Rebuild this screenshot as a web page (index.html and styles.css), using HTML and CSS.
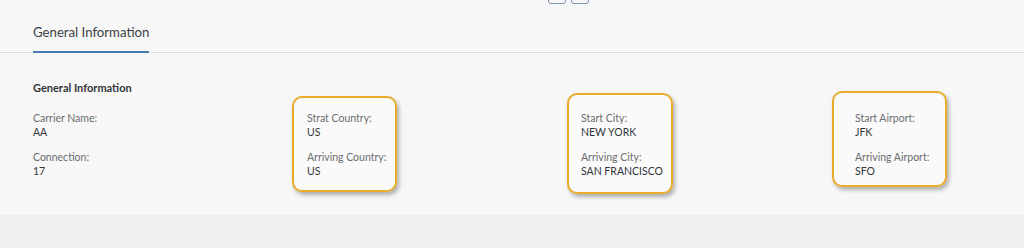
FILE: index.html
```html
<!DOCTYPE html>
<html>
<head>
<meta charset="utf-8">
<link rel="stylesheet" href="styles.css">
</head>
<body>
<div class="page">
  <div class="toolbar">
    <span class="tbtn"></span>
    <span class="tbtn"></span>
  </div>
  <div class="tabbar">
    <div class="tab">General Information</div>
  </div>
  <div class="section">
    <div class="sec-title">General Information</div>
    <div class="grid">
      <div class="col">
        <div class="field"><div class="label">Carrier Name:</div><div class="value">AA</div></div>
        <div class="field"><div class="label">Connection:</div><div class="value">17</div></div>
      </div>
      <div class="col">
        <div class="hl hl1"></div>
        <div class="field"><div class="label">Strat Country:</div><div class="value">US</div></div>
        <div class="field"><div class="label">Arriving Country:</div><div class="value">US</div></div>
      </div>
      <div class="col">
        <div class="hl hl2"></div>
        <div class="field"><div class="label">Start City:</div><div class="value">NEW YORK</div></div>
        <div class="field"><div class="label">Arriving City:</div><div class="value">SAN FRANCISCO</div></div>
      </div>
      <div class="col">
        <div class="hl hl3"></div>
        <div class="field"><div class="label">Start Airport:</div><div class="value">JFK</div></div>
        <div class="field"><div class="label">Arriving Airport:</div><div class="value">SFO</div></div>
      </div>
    </div>
  </div>
</div>
</body>
</html>
```
FILE: styles.css
```css
html, body {
  margin: 0;
  padding: 0;
  background: #edeff0;
  font-family: Lato, "Liberation Sans", sans-serif;
  overflow: hidden;
}
.page {
  background: #f7f7f7;
  height: 215px;
}
.toolbar {
  height: 4px;
  overflow: hidden;
  display: flex;
  align-items: flex-end;
  gap: 5px;
  padding-left: 548px;
}
.tbtn {
  display: block;
  width: 16px;
  height: 20px;
  border: 1px solid #7d91b1;
  border-radius: 3px;
  background: #f7f7f7;
  flex: none;
}
.tabbar {
  border-bottom: 1px solid #d9d9d9;
  padding-left: 33px;
  height: 48px;
  display: flex;
  align-items: flex-end;
}
.tab {
  font-size: 13.2px;
  color: #3c4044;
  line-height: 18px;
  padding-bottom: 10px;
  border-bottom: 2px solid #4a7bb0;
  margin-bottom: -1px;
}
.section {
  padding: 28px 0 0 33px;
}
.sec-title {
  font-size: 11px;
  font-weight: bold;
  color: #32363a;
  line-height: 14px;
  margin-bottom: 16px;
}
.grid {
  display: grid;
  grid-template-columns: 274px 274px 274px 1fr;
}
.col {
  position: relative;
  display: flex;
  flex-direction: column;
  gap: 11px;
}
.field {
  position: relative;
  font-size: 10.5px;
  line-height: 14px;
}
.label {
  color: #6a6d70;
}
.value {
  color: #32363a;
}
.hl {
  position: absolute;
  border: 2px solid #e9ab2a;
  border-radius: 10px;
  box-shadow: 2px 3px 4px rgba(0, 0, 0, 0.3);
  background: rgba(255, 255, 255, 0.35);
  box-sizing: border-box;
}
.hl1 { left: -15px; top: -15px; width: 105px; height: 96px; }
.hl2 { left: -14px; top: -18px; width: 106px; height: 101px; }
.hl3 { left: -23px; top: -20px; width: 115px; height: 96px; }
```
